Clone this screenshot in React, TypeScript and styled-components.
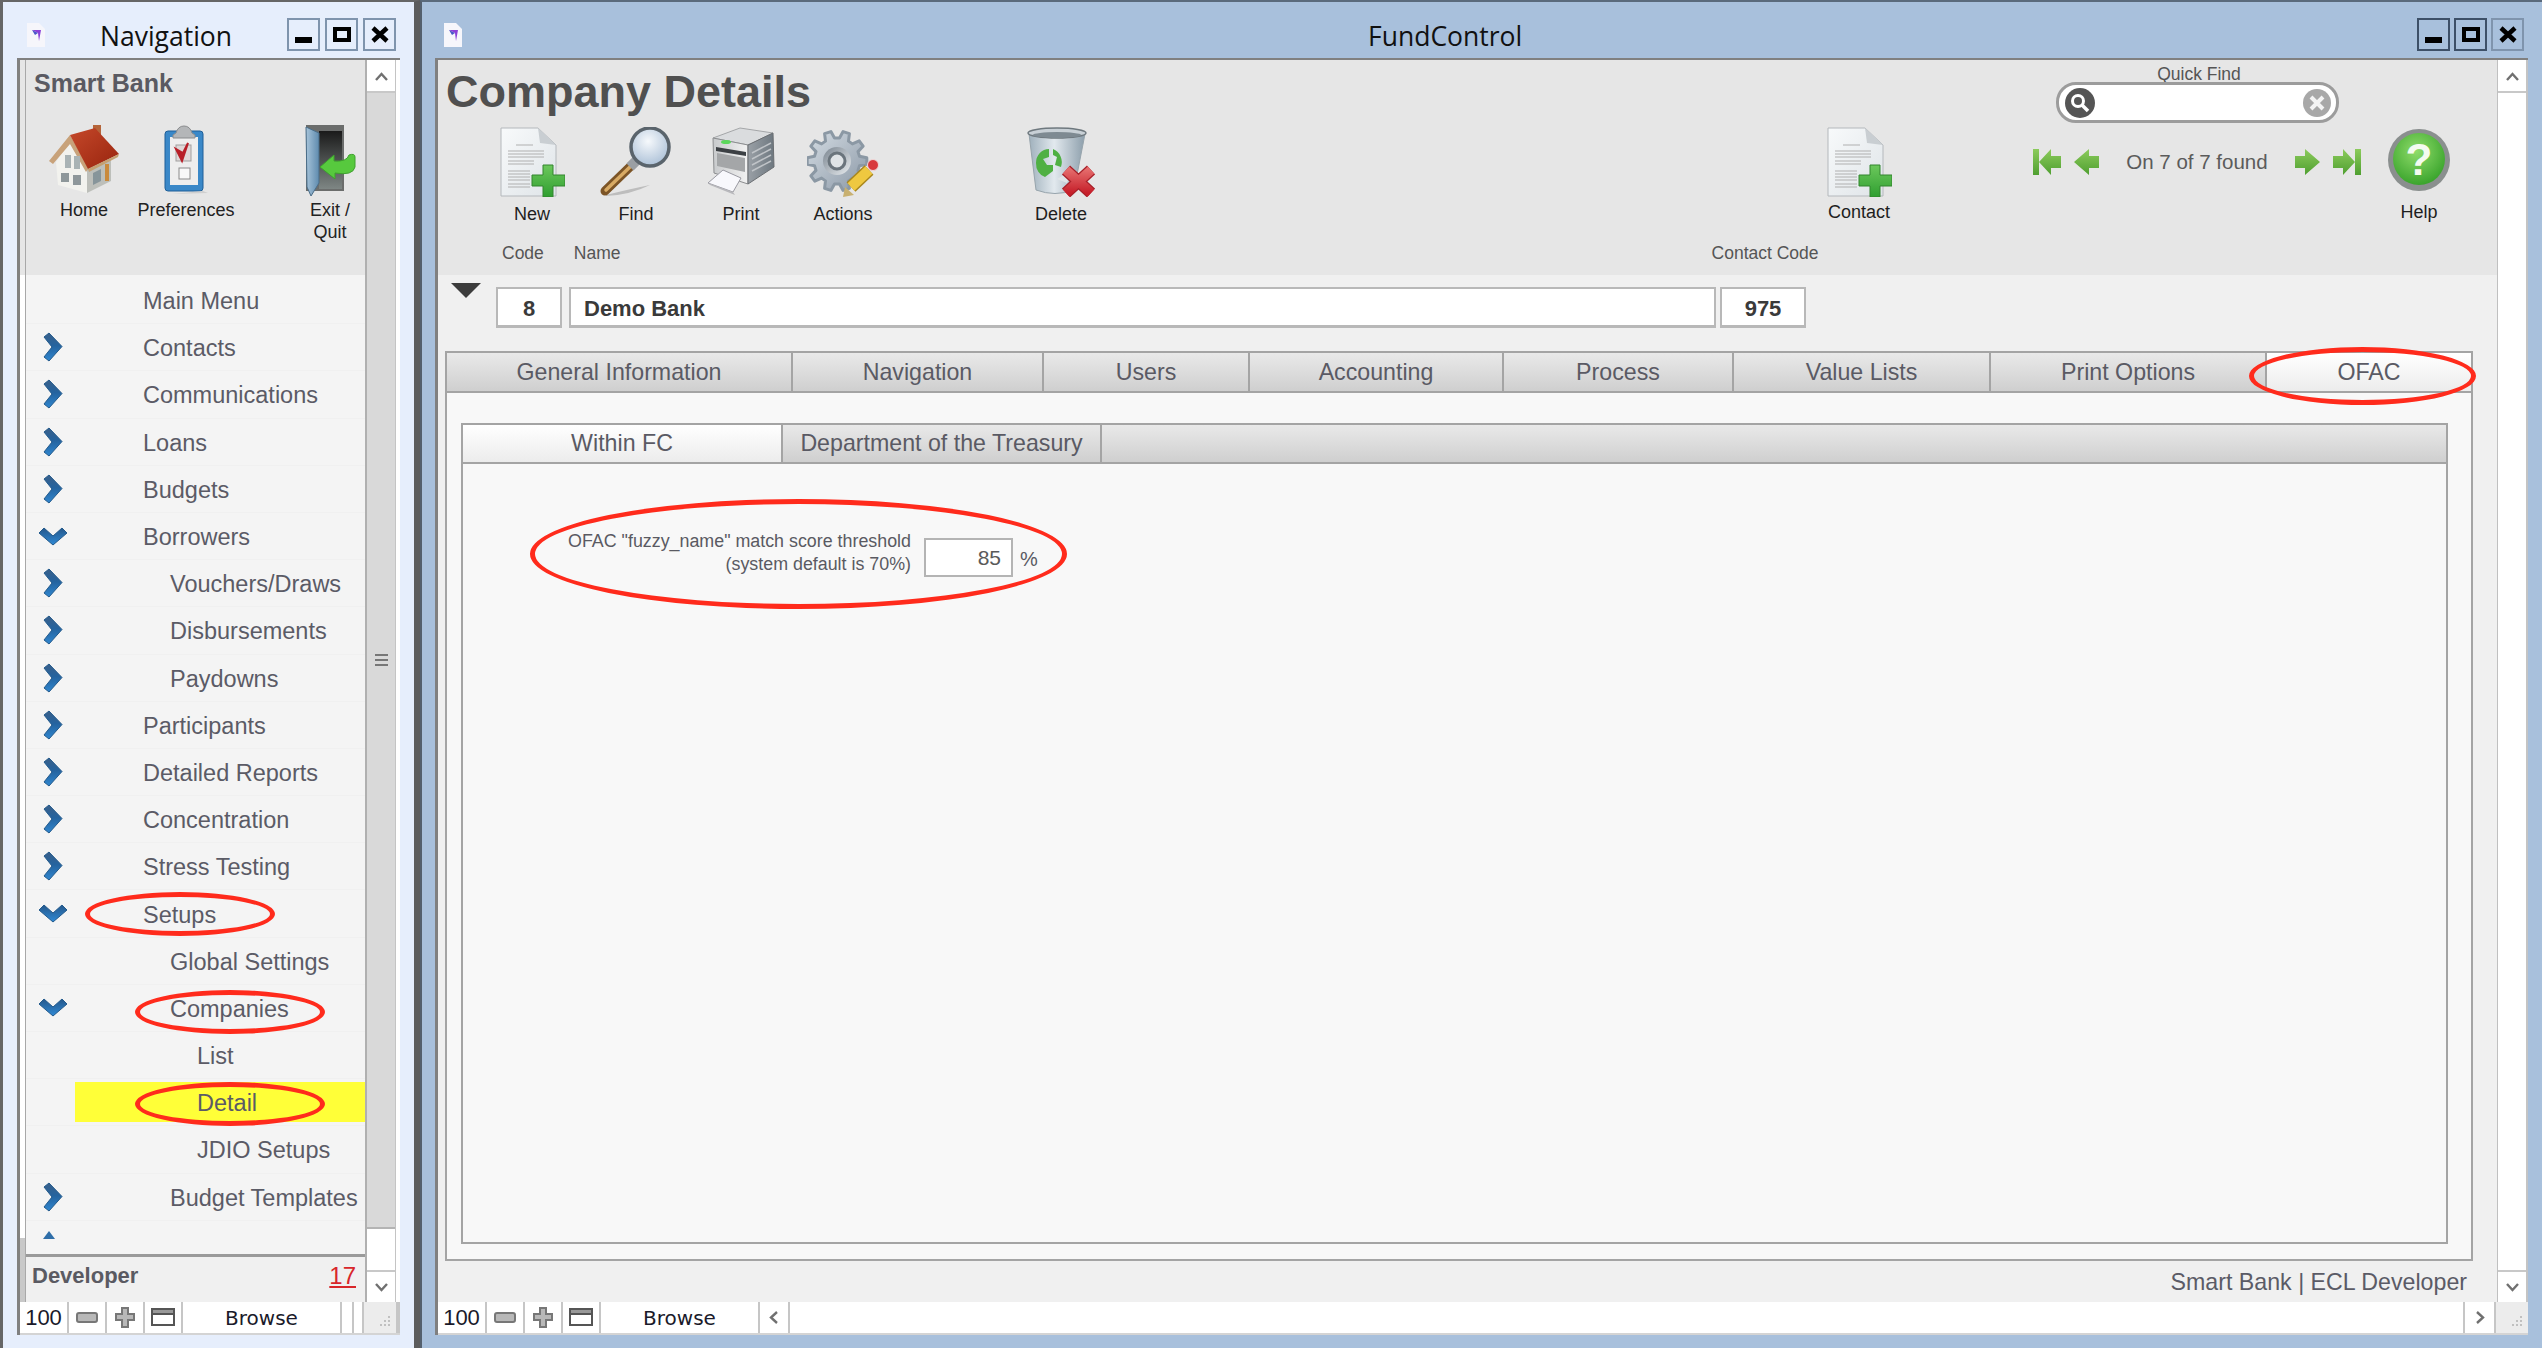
import styled, { createGlobalStyle } from "styled-components";

const GlobalStyle = createGlobalStyle`
    html, body {
        margin: 0;
        padding: 0;
        width: 2542px;
        height: 1348px;
        overflow: hidden;
        font-family: "Liberation Sans", Arial, sans-serif;
    }
    #root {
        height: 100%;
    }
    * {
        box-sizing: border-box;
    }
`;

const Page = styled.div`
    display: flex;
    width: 2542px;
    height: 1348px;
`;

const NavWindow = styled.div`
    width: 420px;
    height: 100%;
    background-color: #e6eefc;
    border-top: 2px solid #666;
    border-left: 3px solid #666;
    border-right: 6px solid #5c5c5c;
    padding-left: 14px;
`;

const MainWindow = styled.div`
    flex: 1;
    height: 100%;
    background-color: #a8c0dc;
    border-top: 2px solid #5a6a7c;
    border-left: 2px solid #54606e;
    padding-left: 13px;
`;

const TitleBar = styled.div<{ $iconGap: number }>`
    height: 56px;
    display: flex;
    align-items: center;
    padding-left: ${p => p.$iconGap}px;
    padding-top: 9px;
`;

const TitleText = styled.div<{ $left: number }>`
    font-family: "Open Sans", sans-serif;
    font-size: 26.5px;
    color: #111;
    margin-left: ${p => p.$left}px;
    margin-top: 3px;
`;

const Controls = styled.div<{ $gap: number }>`
    margin-left: auto;
    margin-right: 18px;
    display: flex;
    gap: ${p => p.$gap}px;
`;

const ControlButton = styled.div<{ $dark?: boolean }>`
    width: 33px;
    height: 33px;
    border: 2px solid ${p => (p.$dark ? "#3d5068" : "#7f94ad")};
    display: flex;
    align-items: center;
    justify-content: center;
`;

const Body = styled.div<{ $width: number }>`
    width: ${p => p.$width}px;
    height: 1277px;
    background-color: #fff;
    border-top: 2px solid #808080;
    border-left: 3px solid #808080;
    display: flex;
    flex-direction: column;
`;

const BodyRow = styled.div`
    flex: 1;
    min-height: 0;
    display: flex;
`;

const Rail = styled.div`
    width: 6px;
    background: linear-gradient(#e6e6e6 215px, #fff 215px, #fff 1178px, #c8c8c8 1178px);
    border-right: 1px solid #a8a8a8;
`;

const NavColumn = styled.div`
    width: 339px;
    display: flex;
    flex-direction: column;
    background-color: #f4f4f4;
`;

const NavHeader = styled.div`
    height: 215px;
    background-color: #e6e6e6;
    padding-left: 8px;
`;

const BankName = styled.div`
    font-size: 25px;
    font-weight: bold;
    color: #5a5a62;
    line-height: 30px;
    padding-top: 8px;
`;

const NavTools = styled.div`
    display: grid;
    grid-template-columns: 116px 118px 1fr;
    margin-top: 27px;
    margin-left: -8px;
`;

const NavTool = styled.div<{ $shift: number }>`
    width: 100px;
    margin-left: ${p => p.$shift}px;
    display: flex;
    flex-direction: column;
    align-items: center;
    font-size: 18px;
    line-height: 22px;
    color: #222;
    text-align: center;
`;

const IconSlot = styled.div<{ $height: number }>`
    height: ${p => p.$height}px;
    display: flex;
    align-items: flex-start;
    justify-content: center;
`;

const Menu = styled.div`
    flex: 1;
    min-height: 0;
    overflow: hidden;
    padding-top: 2px;
`;

const MenuRow = styled.div`
    height: 47.2px;
    display: flex;
    align-items: center;
    position: relative;
    border-bottom: 1px solid #f0f0f0;
`;

const ChevronSlot = styled.div`
    position: absolute;
    left: 12px;
    top: 0;
    bottom: 0;
    width: 30px;
    display: flex;
    align-items: center;
    justify-content: center;
`;

const MenuLabel = styled.div<{ $depth: number; $active?: boolean }>`
    font-size: 23.5px;
    color: #5b5b66;
    white-space: nowrap;
    height: 40px;
    line-height: 42px;
    padding-left: ${p => 117 + p.$depth * 27 - (p.$active ? 49 : 0)}px;
    margin-left: ${p => (p.$active ? 49 : 0)}px;
    width: ${p => (p.$active ? "290px" : "auto")};
    background-color: ${p => (p.$active ? "#ffff38" : "transparent")};
`;

const TipRow = styled.div`
    height: 33px;
    padding: 10px 0 0 17px;
`;

const Mark = styled.div<{ $l: number; $t: number; $w: number; $h: number }>`
    position: absolute;
    left: ${p => p.$l}px;
    top: ${p => p.$t}px;
    width: ${p => p.$w}px;
    height: ${p => p.$h}px;
    border: 5px solid #ff2b1c;
    border-radius: 50%;
    pointer-events: none;
`;

const DeveloperRow = styled.div`
    height: 48px;
    flex: none;
    border-top: 3px solid #9a9a9a;
    background-color: #f0f0f0;
    display: flex;
    align-items: center;
    justify-content: space-between;
    padding: 0 9px 8px 6px;
`;

const DeveloperName = styled.div`
    font-size: 22px;
    font-weight: bold;
    color: #5a5a62;
`;

const DeveloperCount = styled.div`
    font-size: 24px;
    color: #d8262a;
    text-decoration: underline;
`;

const ScrollColumn = styled.div`
    width: 31px;
    display: flex;
    flex-direction: column;
    background-color: #fff;
    border-left: 2px solid #b0b0b0;
    border-right: 1px solid #c4c4c4;
    padding-top: 3px;
`;

const ScrollButton = styled.div`
    height: 30px;
    flex: none;
    background-color: #fff;
    display: flex;
    align-items: center;
    justify-content: center;
    border-bottom: 2px solid #c8c8c8;
`;

const ScrollDown = styled(ScrollButton)`
    border-bottom: none;
    border-top: 2px solid #c8c8c8;
    margin-top: auto;
    margin-bottom: 2px;
`;

const ScrollThumb = styled.div`
    height: 1136px;
    background-color: #d9d9d9;
    border-bottom: 2px solid #b4b4b4;
    display: flex;
    flex-direction: column;
    align-items: center;
    justify-content: center;
    gap: 3px;
`;

const Grip = styled.div`
    width: 13px;
    height: 2px;
    background-color: #777;
`;

const BottomBar = styled.div`
    height: 33px;
    flex: none;
    display: flex;
    gap: 2px;
    background-color: #c6c6c6;
    border-bottom: 2px solid #d4d4d4;
`;

const BarCell = styled.div<{ $width?: number; $grow?: boolean }>`
    width: ${p => (p.$width ? `${p.$width}px` : "auto")};
    flex: ${p => (p.$grow ? 1 : "none")};
    background-color: #fff;
    display: flex;
    align-items: center;
    justify-content: center;
    font-size: 22px;
    color: #1a1a2a;
`;

const BrowseCell = styled(BarCell)`
    font-family: "DejaVu Sans", sans-serif;
    font-size: 20px;
`;

const ResizeCell = styled.div`
    width: 32px;
    flex: none;
    background-color: #ececec;
    display: flex;
    align-items: flex-end;
    justify-content: flex-end;
    padding: 0 5px 4px 0;
`;

const MainColumn = styled.div`
    flex: 1;
    min-width: 0;
    display: flex;
    flex-direction: column;
    background-color: #f0f0f0;
`;

const Header = styled.div`
    height: 215px;
    flex: none;
    background-color: #e6e6e6;
    display: flex;
    flex-direction: column;
`;

const HeaderTop = styled.div`
    height: 176px;
    display: flex;
`;

const HeaderLeft = styled.div`
    width: 1370px;
    flex: none;
`;

const PageTitle = styled.h1`
    margin: 0;
    padding: 4px 0 0 8px;
    font-size: 45px;
    line-height: 55px;
    font-weight: bold;
    color: #505050;
`;

const ToolRow = styled.div`
    display: flex;
    margin: 8px 0 0 43px;
`;

const Tool = styled.div<{ $gap?: number; $top?: number }>`
    width: 102px;
    flex: none;
    margin-left: ${p => p.$gap ?? 0}px;
    margin-top: ${p => p.$top ?? 0}px;
    display: flex;
    flex-direction: column;
    align-items: center;
    font-size: 18px;
    color: #1e1e1e;
    line-height: 22px;
`;

const NavBlock = styled.div`
    width: 328px;
    margin-left: 123px;
    flex: none;
    display: flex;
    flex-direction: column;
    align-items: center;
`;

const QuickLabel = styled.div`
    font-size: 17.5px;
    line-height: 20px;
    color: #555;
    margin-top: 4px;
    margin-left: 4px;
`;

const QuickFind = styled.div`
    width: 283px;
    height: 41px;
    margin-top: -2px;
    background-color: #fff;
    border: 3px solid #9c9c9c;
    border-radius: 20px;
    display: flex;
    align-items: center;
    justify-content: space-between;
    padding: 0 5px 0 6px;
`;

const RecordNav = styled.div`
    margin-top: 25px;
    height: 27px;
    width: 100%;
    display: flex;
    align-items: center;
    justify-content: space-between;
    font-size: 20.5px;
    color: #5b5b5b;
`;

const NavArrows = styled.div`
    display: flex;
    align-items: center;
    gap: 12px;
`;

const LabelRow = styled.div`
    height: 39px;
    display: flex;
    align-items: center;
    font-size: 17.5px;
    color: #555;
`;

const FieldLabel = styled.div<{ $left: number }>`
    margin-left: ${p => p.$left}px;
    margin-top: -4px;
`;

const FieldRow = styled.div`
    height: 41px;
    margin-top: 12px;
    margin-bottom: 23px;
    display: flex;
    flex: none;
`;

const Caret = styled.div`
    width: 0;
    height: 0;
    margin: -4px 0 0 13px;
    border-left: 15px solid transparent;
    border-right: 15px solid transparent;
    border-top: 15px solid #3c3c3c;
`;

const Field = styled.div<{ $width: number; $gap: number; $center?: boolean }>`
    width: ${p => p.$width}px;
    margin-left: ${p => p.$gap}px;
    background-color: #fff;
    border: 2px solid #b8b8b8;
    border-bottom-width: 3px;
    font-size: 22px;
    font-weight: bold;
    color: #3a3a3a;
    padding-top: 3px;
    display: flex;
    align-items: center;
    justify-content: ${p => (p.$center ? "center" : "flex-start")};
    padding-left: ${p => (p.$center ? 0 : 13)}px;
`;

const TabPanel = styled.div`
    height: 910px;
    flex: none;
    margin: 0 24px 0 7px;
    border: 2px solid #a4a4a4;
    background-color: #f8f8f8;
    display: flex;
    flex-direction: column;
`;

const TabStrip = styled.div<{ $columns: string; $height: number }>`
    height: ${p => p.$height}px;
    flex: none;
    display: grid;
    grid-template-columns: ${p => p.$columns};
    border-bottom: 2px solid #a4a4a4;
`;

const Tab = styled.div<{ $active?: boolean }>`
    position: relative;
    display: flex;
    align-items: center;
    justify-content: center;
    font-size: 23.2px;
    color: #5a5a64;
    background: ${p =>
        p.$active
            ? "linear-gradient(#ffffff, #ececec)"
            : "linear-gradient(#e9e9e9, #cfcfcf)"};
    border-right: 2px solid #a4a4a4;
    &:last-child {
        border-right: none;
    }
`;

const SubPanel = styled.div`
    flex: 1;
    margin: 30px 23px 15px 14px;
    border: 2px solid #a4a4a4;
    display: flex;
    flex-direction: column;
`;

const FormRow = styled.div`
    position: relative;
    display: flex;
    margin: 74px 0 0 48px;
`;

const FormLabel = styled.div`
    width: 400px;
    text-align: right;
    font-size: 17.85px;
    line-height: 23px;
    color: #5a5a62;
    margin-top: -8px;
    height: 39px;
`;

const NumberBox = styled.div`
    width: 89px;
    height: 39px;
    margin-left: 13px;
    background-color: #fff;
    border: 2px solid #b4b4b4;
    font-size: 21px;
    color: #5a5a5a;
    display: flex;
    align-items: center;
    justify-content: flex-end;
    padding-right: 10px;
`;

const Percent = styled.div`
    margin-left: 7px;
    font-size: 20px;
    line-height: 42px;
    color: #5a5a62;
`;

const StatusRow = styled.div`
    flex: 1;
    display: flex;
    align-items: center;
    justify-content: flex-end;
    padding-right: 30px;
    font-size: 23.2px;
    color: #5b5b66;
    padding-top: 2px;
`;

const RightScroll = styled.div`
    width: 31px;
    flex: none;
    display: flex;
    flex-direction: column;
    background-color: #fff;
    border-left: 1px solid #c0c0c0;
    border-right: 2px solid #c4c4c4;
    padding-top: 3px;
`;

function gearPath(cx: number, cy: number, outer: number, inner: number, teeth: number): string {
    const points: string[] = [];
    for (let i = 0; i < teeth; i++) {
        const step = (Math.PI * 2) / teeth;
        const base = i * step;
        const offsets: [number, number][] = [
            [-0.3, inner],
            [-0.16, outer],
            [0.16, outer],
            [0.3, inner],
        ];
        offsets.forEach(([o, r]) => {
            const a = base + o * step * 1.1;
            points.push(`${(cx + Math.cos(a) * r).toFixed(1)},${(cy + Math.sin(a) * r).toFixed(1)}`);
        });
    }
    return `M${points.join("L")}Z`;
}

function AppIcon() {
    return (
        <svg width="20" height="26" viewBox="0 0 20 26">
            <path d="M1 1H13L19 7V25H1Z" fill="#f6f6fb" />
            <path d="M6 8L15 8L13 19L12 11Z" fill="#8a3fd8" />
            <path d="M6 8L12 11L9 13Z" fill="#4a56c8" />
        </svg>
    );
}

function MinGlyph() {
    return (
        <svg width="18" height="18" viewBox="0 0 18 18">
            <rect x="0" y="11" width="17" height="6" fill="#000" />
        </svg>
    );
}

function MaxGlyph() {
    return (
        <svg width="18" height="18" viewBox="0 0 18 18">
            <rect x="2" y="3" width="14" height="11" fill="none" stroke="#000" strokeWidth="4" />
        </svg>
    );
}

function CloseGlyph() {
    return (
        <svg width="18" height="18" viewBox="0 0 18 18">
            <path d="M2 2L16 15M16 2L2 15" stroke="#000" strokeWidth="4.5" />
        </svg>
    );
}

function ChevronRight() {
    return (
        <svg width="20" height="30" viewBox="0 0 20 30">
            <defs>
                <linearGradient id="chevR" x1="0" y1="0" x2="0" y2="1">
                    <stop offset="0" stopColor="#3a5f88" />
                    <stop offset="0.45" stopColor="#24639f" />
                    <stop offset="1" stopColor="#2f86cf" />
                </linearGradient>
            </defs>
            <path d="M1 5L6 1L19 14.5L6 29L1 25L9 15Z" fill="url(#chevR)" stroke="#235a8c" strokeWidth="1" />
        </svg>
    );
}

function ChevronDown() {
    return (
        <svg width="30" height="19" viewBox="0 0 30 19">
            <defs>
                <linearGradient id="chevD" x1="0" y1="0" x2="0" y2="1">
                    <stop offset="0" stopColor="#25578a" />
                    <stop offset="1" stopColor="#2f8ad6" />
                </linearGradient>
            </defs>
            <path d="M1 6L6 1L15 9L24 1L29 6L15 18Z" fill="url(#chevD)" stroke="#235a8c" strokeWidth="1" />
        </svg>
    );
}

function ChevronTip() {
    return (
        <svg width="12" height="8" viewBox="0 0 12 8" style={{ display: "block" }}>
            <path d="M0 8L6 0L12 8Z" fill="#2f6ea8" />
        </svg>
    );
}

function ScrollArrow({ dir }: { dir: "up" | "down" | "left" | "right" }) {
    const paths = {
        up: "M2 10L7.5 4L13 10",
        down: "M2 5L7.5 11L13 5",
        left: "M10 2L4 7.5L10 13",
        right: "M5 2L11 7.5L5 13",
    };
    return (
        <svg width="15" height="15" viewBox="0 0 15 15">
            <path d={paths[dir]} fill="none" stroke="#707070" strokeWidth="2.4" />
        </svg>
    );
}

function HouseIcon() {
    return (
        <svg width="70" height="70" viewBox="0 0 70 70">
            <defs>
                <linearGradient id="roof" x1="0" y1="0" x2="1" y2="1">
                    <stop offset="0" stopColor="#c5482a" />
                    <stop offset="1" stopColor="#98240e" />
                </linearGradient>
            </defs>
            <rect x="44" y="0" width="8" height="12" fill="#b5653a" />
            <path d="M7 37L22 14L38 44V68L9 60Z" fill="#f2f2ee" />
            <path d="M38 44L62 33V56L38 68Z" fill="#bdbfba" />
            <path d="M0 36L21 10L40 43L37 47L21 19L4 39Z" fill="#c8a27a" />
            <path d="M21 10L46 3L70 29L39 44Z" fill="url(#roof)" />
            <path d="M39 44L70 29L69 32L40 47Z" fill="#c4a072" />
            <rect x="16" y="30" width="6" height="13" fill="#a9b3b5" />
            <rect x="25" y="31" width="6" height="13" fill="#a9b3b5" />
            <rect x="12" y="48" width="8" height="9" fill="#8e979a" />
            <rect x="24" y="50" width="8" height="10" fill="#8e979a" />
            <path d="M44 48L52 44V56L44 60Z" fill="#87959a" />
            <rect x="56" y="39" width="4" height="17" fill="#c98a3c" />
        </svg>
    );
}

function ClipboardIcon() {
    return (
        <svg width="44" height="70" viewBox="0 0 44 70">
            <rect x="1" y="6" width="38" height="60" rx="3" fill="#3a88c8" stroke="#1f5f98" />
            <rect x="6" y="12" width="28" height="48" fill="#eeeeee" />
            <path d="M12 8Q14 1 20 1Q26 1 28 8L31 10V13H9V10Z" fill="#b4b6b8" stroke="#8a8c8e" />
            <rect x="12" y="20" width="15" height="16" fill="#e0d8d8" stroke="#a0a0a0" />
            <path d="M12 24L18 36L24 18L19 28Z" fill="#b81f28" stroke="#b81f28" strokeWidth="2" />
            <rect x="15" y="43" width="11" height="11" fill="#f8f8f8" stroke="#8a8a8a" />
            <path d="M39 66L44 68L8 69Z" fill="#cfcfcf" />
        </svg>
    );
}

function DoorIcon() {
    return (
        <svg width="51" height="72" viewBox="0 0 51 72">
            <defs>
                <linearGradient id="doorway" x1="0" y1="0" x2="0" y2="1">
                    <stop offset="0" stopColor="#1a1a1a" />
                    <stop offset="1" stopColor="#7e8684" />
                </linearGradient>
                <linearGradient id="doorLeaf" x1="0" y1="0" x2="1" y2="0">
                    <stop offset="0" stopColor="#a7c4da" />
                    <stop offset="1" stopColor="#5f8bae" />
                </linearGradient>
            </defs>
            <rect x="1" y="0" width="38" height="66" fill="#6b6d6c" />
            <rect x="14" y="6" width="23" height="58" fill="url(#doorway)" />
            <path d="M1 2L14 8V58L6 71L2 62Z" fill="url(#doorLeaf)" stroke="#4a6d88" />
            <path d="M15 42L29 30V36Q42 37 44 30Q50 28 50 32V42Q48 51 30 48V54Z" fill="#57c93e" stroke="#3ea02e" />
        </svg>
    );
}

function DocPlusIcon({ id }: { id: string }) {
    return (
        <svg width="65" height="70" viewBox="0 0 65 70">
            <defs>
                <linearGradient id={id} x1="0" y1="0" x2="1" y2="1">
                    <stop offset="0" stopColor="#f8fafb" />
                    <stop offset="1" stopColor="#dfe4e8" />
                </linearGradient>
                <linearGradient id={`${id}Plus`} x1="0" y1="0" x2="0" y2="1">
                    <stop offset="0" stopColor="#6cc85c" />
                    <stop offset="1" stopColor="#2f9e30" />
                </linearGradient>
            </defs>
            <path d="M1 1H38L56 18V69H1Z" fill={`url(#${id})`} stroke="#b4b8bc" />
            <path d="M38 1L40 16L56 18Z" fill="#c9ced2" />
            <path d="M16 18H33M8 24H44M8 27H44M8 30H44M8 34H34M8 37H34M8 44H30M8 47H30M8 50H30M8 53H30M8 57H30M8 60H30" stroke="#b0b0b0" strokeWidth="1.2" />
            <path d="M43 38H53V48H65V59H53V70H43V59H32V48H43Z" fill={`url(#${id}Plus)`} stroke="#33852f" />
        </svg>
    );
}

function FindIcon() {
    return (
        <svg width="72" height="70" viewBox="0 0 72 70">
            <defs>
                <radialGradient id="lens" cx="0.45" cy="0.35" r="0.75">
                    <stop offset="0" stopColor="#f6f9fc" />
                    <stop offset="1" stopColor="#a2b9d2" />
                </radialGradient>
            </defs>
            <path d="M6 68Q30 62 50 58Q30 68 6 69Z" fill="#bdbdbd" />
            <path d="M5 64L34 36" stroke="#7c5426" strokeWidth="9" strokeLinecap="round" />
            <path d="M6 63L32 38" stroke="#d8aa64" strokeWidth="3.5" strokeLinecap="round" />
            <path d="M30 40L36 34" stroke="#9a9fa4" strokeWidth="10" />
            <circle cx="50" cy="20" r="19" fill="url(#lens)" stroke="#5a646c" strokeWidth="3.5" />
        </svg>
    );
}

function PrintIcon() {
    return (
        <svg width="67" height="70" viewBox="0 0 67 70">
            <defs>
                <linearGradient id="pFront" x1="0" y1="0" x2="1" y2="0">
                    <stop offset="0" stopColor="#c8cacc" />
                    <stop offset="1" stopColor="#f2f2f2" />
                </linearGradient>
                <linearGradient id="pSide" x1="0" y1="0" x2="1" y2="0">
                    <stop offset="0" stopColor="#9aa0a6" />
                    <stop offset="1" stopColor="#6e7880" />
                </linearGradient>
            </defs>
            <path d="M5 11L32 1L65 6L40 18Z" fill="#dadcde" stroke="#a4a6a8" />
            <path d="M5 11L40 18V57L6 46Z" fill="url(#pFront)" stroke="#8c8e90" />
            <path d="M40 18L65 6L66 40L40 57Z" fill="url(#pSide)" stroke="#6a6e72" />
            <path d="M44 26L63 16M44 32L63 22M44 38L63 28M44 44L63 34" stroke="#c0c4c8" strokeWidth="1.5" />
            <path d="M8 20L38 25V29L8 24Z" fill="#3c4044" />
            <path d="M9 26L37 31V45L9 39Z" fill="#a4a6a8" />
            <ellipse cx="18" cy="15" rx="5" ry="2" fill="#5cd85c" />
            <path d="M0 56L15 43L33 51L25 65Z" fill="#f8f8fc" stroke="#9a9aa2" />
            <path d="M0 56L25 65L27 68L2 58Z" fill="#b8b8bc" />
        </svg>
    );
}

function ActionsIcon() {
    return (
        <svg width="72" height="72" viewBox="0 0 72 72">
            <defs>
                <linearGradient id="gearFill" x1="0" y1="0" x2="1" y2="1">
                    <stop offset="0" stopColor="#d5dde4" />
                    <stop offset="1" stopColor="#8b98a6" />
                </linearGradient>
                <linearGradient id="gearRing" x1="0" y1="0" x2="1" y2="1">
                    <stop offset="0" stopColor="#7a8590" />
                    <stop offset="1" stopColor="#e8ecef" />
                </linearGradient>
            </defs>
            <path d={gearPath(30, 34, 30, 23, 10)} fill="url(#gearFill)" stroke="#8b98a4" strokeWidth="3" strokeLinejoin="round" />
            <circle cx="30" cy="34" r="14" fill="url(#gearRing)" />
            <circle cx="30" cy="34" r="8" fill="#dfe3e6" stroke="#6a747c" strokeWidth="3" />
            <path d="M44 60L62 43" stroke="#a8861c" strokeWidth="13" />
            <path d="M44 60L62 43" stroke="#efc840" strokeWidth="10" />
            <path d="M38 60L47 68L36 70Z" fill="#c8b070" />
            <circle cx="66" cy="38" r="5.5" fill="#d8383c" stroke="#f0d8d8" strokeWidth="1" />
        </svg>
    );
}

function DeleteIcon() {
    return (
        <svg width="68" height="70" viewBox="0 0 68 70">
            <defs>
                <linearGradient id="bin" x1="0" y1="0" x2="1" y2="0">
                    <stop offset="0" stopColor="#9fb0bc" />
                    <stop offset="0.45" stopColor="#e2e9ee" />
                    <stop offset="1" stopColor="#8c9eab" />
                </linearGradient>
                <linearGradient id="binX" x1="0" y1="0" x2="0" y2="1">
                    <stop offset="0" stopColor="#e46a6a" />
                    <stop offset="1" stopColor="#c61f2a" />
                </linearGradient>
            </defs>
            <path d="M2 7L9 63Q28 70 47 63L58 7Z" fill="url(#bin)" stroke="#97a4ac" />
            <ellipse cx="30" cy="6" rx="29" ry="5" fill="#c8d0d6" stroke="#6e787e" strokeWidth="1.5" />
            <ellipse cx="30" cy="8" rx="24" ry="3" fill="#7e8a92" />
            <path d="M9 36A13 14 0 0 1 22 22V30L16 32L20 38H26V44L18 50A13 14 0 0 1 9 36Z" fill="#4fb044" />
            <path d="M26 22A13 14 0 0 1 34 40L28 38L30 30L26 28Z" fill="#4fb044" />
            <path d="M30 52L44 44L40 56Z" fill="#dfe5e8" />
            <path d="M39 43L64 66M64 43L39 66" stroke="#a81f28" strokeWidth="12" />
            <path d="M39 43L64 66M64 43L39 66" stroke="url(#binX)" strokeWidth="9.5" />
        </svg>
    );
}

function SearchCircle() {
    return (
        <svg width="30" height="30" viewBox="0 0 30 30">
            <circle cx="15" cy="15" r="15" fill="#555" />
            <circle cx="13" cy="13" r="5.5" fill="none" stroke="#fff" strokeWidth="3" />
            <path d="M17 17L23 23" stroke="#fff" strokeWidth="3.5" />
        </svg>
    );
}

function ClearCircle() {
    return (
        <svg width="28" height="28" viewBox="0 0 28 28">
            <circle cx="14" cy="14" r="14" fill="#a8a8a8" />
            <path d="M8 8L20 20M20 8L8 20" stroke="#f4f4f4" strokeWidth="4" />
        </svg>
    );
}

function GreenArrow({ dir, bar }: { dir: "left" | "right"; bar?: boolean }) {
    const flip = dir === "right" ? "translate(28 0) scale(-1 1)" : undefined;
    const gradientId = `arrow${dir}${bar ? "Bar" : ""}`;
    return (
        <svg width="28" height="28" viewBox="0 0 28 28">
            <defs>
                <linearGradient id={gradientId} x1="0" y1="0" x2="0" y2="1">
                    <stop offset="0" stopColor="#8ccb5c" />
                    <stop offset="1" stopColor="#4f9f30" />
                </linearGradient>
            </defs>
            <g transform={flip}>
                {bar ? (
                    <>
                        <rect x="0" y="1" width="6" height="26" fill={`url(#${gradientId})`} />
                        <path d="M6 14L18 1V8H28V20H18V27Z" fill={`url(#${gradientId})`} />
                    </>
                ) : (
                    <path d="M1 14L16 1V8H26V20H16V27Z" fill={`url(#${gradientId})`} />
                )}
            </g>
        </svg>
    );
}

function HelpIcon() {
    return (
        <svg width="64" height="64" viewBox="0 0 64 64">
            <defs>
                <radialGradient id="helpBall" cx="0.45" cy="0.35" r="0.7">
                    <stop offset="0" stopColor="#8fdc6a" />
                    <stop offset="1" stopColor="#34a028" />
                </radialGradient>
            </defs>
            <circle cx="32" cy="32" r="31" fill="#8a8f8e" />
            <circle cx="32" cy="31" r="26" fill="url(#helpBall)" />
            <text x="32" y="47" textAnchor="middle" fontFamily="Liberation Sans" fontWeight="bold" fontSize="44" fill="#f4fbf0">?</text>
        </svg>
    );
}

function ZoomMinus() {
    return (
        <svg width="22" height="14" viewBox="0 0 22 14">
            <rect x="1" y="2" width="20" height="9" rx="2" fill="#b8b8b8" stroke="#777" strokeWidth="2" />
        </svg>
    );
}

function ZoomPlus() {
    return (
        <svg width="20" height="22" viewBox="0 0 20 22">
            <path d="M7 1H13V7H19V13H13V20H7V13H1V7H7Z" fill="#b8b8b8" stroke="#777" strokeWidth="2" />
        </svg>
    );
}

function BarToggle() {
    return (
        <svg width="24" height="20" viewBox="0 0 24 20">
            <rect x="1" y="1" width="22" height="16" fill="#fff" stroke="#555" strokeWidth="2" />
            <rect x="1" y="1" width="22" height="5" fill="#999" stroke="#555" strokeWidth="2" />
        </svg>
    );
}

function ResizeGrip() {
    return (
        <svg width="16" height="16" viewBox="0 0 16 16">
            <path d="M13 3h2v2h-2zM9 7h2v2H9zM13 7h2v2h-2zM5 11h2v2H5zM9 11h2v2H9zM13 11h2v2h-2z" fill="#c0c0c0" />
        </svg>
    );
}

type MenuItem = {
    label: string;
    depth: number;
    icon?: "right" | "down";
    active?: boolean;
    mark?: [number, number, number, number];
};

const menuItems: MenuItem[] = [
    { label: "Main Menu", depth: 0 },
    { label: "Contacts", depth: 0, icon: "right" },
    { label: "Communications", depth: 0, icon: "right" },
    { label: "Loans", depth: 0, icon: "right" },
    { label: "Budgets", depth: 0, icon: "right" },
    { label: "Borrowers", depth: 0, icon: "down" },
    { label: "Vouchers/Draws", depth: 1, icon: "right" },
    { label: "Disbursements", depth: 1, icon: "right" },
    { label: "Paydowns", depth: 1, icon: "right" },
    { label: "Participants", depth: 0, icon: "right" },
    { label: "Detailed Reports", depth: 0, icon: "right" },
    { label: "Concentration", depth: 0, icon: "right" },
    { label: "Stress Testing", depth: 0, icon: "right" },
    { label: "Setups", depth: 0, icon: "down", mark: [59, 2, 190, 44] },
    { label: "Global Settings", depth: 1 },
    { label: "Companies", depth: 1, icon: "down", mark: [109, 5, 190, 44] },
    { label: "List", depth: 2 },
    { label: "Detail", depth: 2, active: true, mark: [109, 3, 190, 44] },
    { label: "JDIO Setups", depth: 2 },
    { label: "Budget Templates", depth: 1, icon: "right" },
];

const topTabs = [
    "General Information",
    "Navigation",
    "Users",
    "Accounting",
    "Process",
    "Value Lists",
    "Print Options",
];

function App(): JSX.Element {
    return (
        <Page>
            <GlobalStyle />
            <NavWindow>
                <TitleBar $iconGap={9}>
                    <AppIcon />
                    <TitleText $left={54}>Navigation</TitleText>
                    <Controls $gap={5}>
                        <ControlButton><MinGlyph /></ControlButton>
                        <ControlButton><MaxGlyph /></ControlButton>
                        <ControlButton><CloseGlyph /></ControlButton>
                    </Controls>
                </TitleBar>
                <Body $width={383}>
                    <BodyRow>
                        <Rail />
                        <NavColumn>
                            <NavHeader>
                                <BankName>Smart Bank</BankName>
                                <NavTools>
                                    <NavTool $shift={8}>
                                        <IconSlot $height={74}><HouseIcon /></IconSlot>
                                        Home
                                    </NavTool>
                                    <NavTool $shift={-6}>
                                        <IconSlot $height={74}><ClipboardIcon /></IconSlot>
                                        Preferences
                                    </NavTool>
                                    <NavTool $shift={20}>
                                        <IconSlot $height={74}><DoorIcon /></IconSlot>
                                        Exit /<br />Quit
                                    </NavTool>
                                </NavTools>
                            </NavHeader>
                            <Menu>
                                {menuItems.map(item => (
                                    <MenuRow key={item.label}>
                                        {item.icon && (
                                            <ChevronSlot>
                                                {item.icon === "right" ? <ChevronRight /> : <ChevronDown />}
                                            </ChevronSlot>
                                        )}
                                        <MenuLabel $depth={item.depth} $active={item.active}>{item.label}</MenuLabel>
                                        {item.mark && (
                                            <Mark $l={item.mark[0]} $t={item.mark[1]} $w={item.mark[2]} $h={item.mark[3]} />
                                        )}
                                    </MenuRow>
                                ))}
                                <TipRow><ChevronTip /></TipRow>
                            </Menu>
                            <DeveloperRow>
                                <DeveloperName>Developer</DeveloperName>
                                <DeveloperCount>17</DeveloperCount>
                            </DeveloperRow>
                        </NavColumn>
                        <ScrollColumn>
                            <ScrollButton><ScrollArrow dir="up" /></ScrollButton>
                            <ScrollThumb><Grip /><Grip /><Grip /></ScrollThumb>
                            <ScrollDown><ScrollArrow dir="down" /></ScrollDown>
                        </ScrollColumn>
                    </BodyRow>
                    <BottomBar>
                        <BarCell $width={47}>100</BarCell>
                        <BarCell $width={36}><ZoomMinus /></BarCell>
                        <BarCell $width={36}><ZoomPlus /></BarCell>
                        <BarCell $width={36}><BarToggle /></BarCell>
                        <BrowseCell $width={157}>Browse</BrowseCell>
                        <BarCell $width={10} />
                        <BarCell $width={8} />
                        <ResizeCell><ResizeGrip /></ResizeCell>
                    </BottomBar>
                </Body>
            </NavWindow>
            <MainWindow>
                <TitleBar $iconGap={8}>
                    <AppIcon />
                    <TitleText $left={905}>FundControl</TitleText>
                    <Controls $gap={4}>
                        <ControlButton $dark><MinGlyph /></ControlButton>
                        <ControlButton $dark><MaxGlyph /></ControlButton>
                        <ControlButton><CloseGlyph /></ControlButton>
                    </Controls>
                </TitleBar>
                <Body $width={2093}>
                    <BodyRow>
                        <MainColumn>
                            <Header>
                                <HeaderTop>
                                    <HeaderLeft>
                                        <PageTitle>Company Details</PageTitle>
                                        <ToolRow>
                                            <Tool><IconSlot $height={76}><DocPlusIcon id="docNew" /></IconSlot>New</Tool>
                                            <Tool $gap={2}><IconSlot $height={76}><FindIcon /></IconSlot>Find</Tool>
                                            <Tool $gap={3}><IconSlot $height={76}><PrintIcon /></IconSlot>Print</Tool>
                                            <Tool><IconSlot $height={76}><ActionsIcon /></IconSlot>Actions</Tool>
                                            <Tool $gap={116}><IconSlot $height={76}><DeleteIcon /></IconSlot>Delete</Tool>
                                        </ToolRow>
                                    </HeaderLeft>
                                    <Tool $top={67}><IconSlot $height={74}><DocPlusIcon id="docContact" /></IconSlot>Contact</Tool>
                                    <NavBlock>
                                        <QuickLabel>Quick Find</QuickLabel>
                                        <QuickFind>
                                            <SearchCircle />
                                            <ClearCircle />
                                        </QuickFind>
                                        <RecordNav>
                                            <NavArrows>
                                                <GreenArrow dir="left" bar />
                                                <GreenArrow dir="left" />
                                            </NavArrows>
                                            On 7 of 7 found
                                            <NavArrows>
                                                <GreenArrow dir="right" />
                                                <GreenArrow dir="right" bar />
                                            </NavArrows>
                                        </RecordNav>
                                    </NavBlock>
                                    <Tool $gap={7} $top={68}><IconSlot $height={73}><HelpIcon /></IconSlot>Help</Tool>
                                </HeaderTop>
                                <LabelRow>
                                    <FieldLabel $left={64}>Code</FieldLabel>
                                    <FieldLabel $left={30}>Name</FieldLabel>
                                    <FieldLabel $left={1091}>Contact Code</FieldLabel>
                                </LabelRow>
                            </Header>
                            <FieldRow>
                                <Caret />
                                <Field $width={66} $gap={15} $center>8</Field>
                                <Field $width={1147} $gap={7}>Demo Bank</Field>
                                <Field $width={86} $gap={4} $center>975</Field>
                            </FieldRow>
                            <TabPanel>
                                <TabStrip $columns="346px 251px 206px 254px 230px 257px 276px 1fr" $height={40}>
                                    {topTabs.map(tab => <Tab key={tab}>{tab}</Tab>)}
                                    <Tab $active>
                                        OFAC
                                        <Mark $l={-18} $t={-6} $w={227} $h={58} />
                                    </Tab>
                                </TabStrip>
                                <SubPanel>
                                    <TabStrip $columns="320px 319px 1fr" $height={39}>
                                        <Tab $active>Within FC</Tab>
                                        <Tab>Department of the Treasury</Tab>
                                        <Tab />
                                    </TabStrip>
                                    <FormRow>
                                        <FormLabel>
                                            OFAC "fuzzy_name" match score threshold<br />
                                            (system default is 70%)
                                        </FormLabel>
                                        <NumberBox>85</NumberBox>
                                        <Percent>%</Percent>
                                        <Mark $l={19} $t={-39} $w={537} $h={110} />
                                    </FormRow>
                                </SubPanel>
                            </TabPanel>
                            <StatusRow>Smart Bank | ECL Developer</StatusRow>
                        </MainColumn>
                        <RightScroll>
                            <ScrollButton><ScrollArrow dir="up" /></ScrollButton>
                            <ScrollDown><ScrollArrow dir="down" /></ScrollDown>
                        </RightScroll>
                    </BodyRow>
                    <BottomBar>
                        <BarCell $width={47}>100</BarCell>
                        <BarCell $width={36}><ZoomMinus /></BarCell>
                        <BarCell $width={36}><ZoomPlus /></BarCell>
                        <BarCell $width={36}><BarToggle /></BarCell>
                        <BrowseCell $width={157}>Browse</BrowseCell>
                        <BarCell $width={28}><ScrollArrow dir="left" /></BarCell>
                        <BarCell $grow />
                        <BarCell $width={29}><ScrollArrow dir="right" /></BarCell>
                        <ResizeCell><ResizeGrip /></ResizeCell>
                    </BottomBar>
                </Body>
            </MainWindow>
        </Page>
    );
}

export default App;
